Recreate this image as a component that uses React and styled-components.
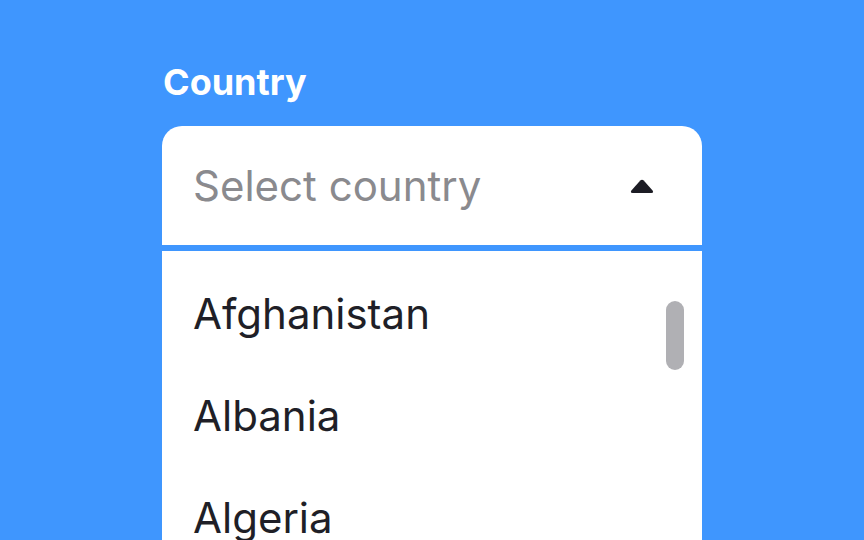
import styled, { createGlobalStyle } from "styled-components";

const COUNTRIES = ["Afghanistan", "Albania", "Algeria", "Andorra", "Angola"];

const GlobalStyle = createGlobalStyle`
  html, body {
    margin: 0;
    padding: 0;
    background: #3f96fe;
    overflow: hidden;
  }
  body {
    font-family: Inter, "Noto Sans", sans-serif;
  }
`;

const App = () => {
  return (
    <>
      <GlobalStyle />
      <Page>
        <Field>
          <Label>Country</Label>
          <SelectBox>
            <Placeholder>Select country</Placeholder>
            <Caret viewBox="0 0 24 16">
              <path
                d="M10.3 1.6 Q12 -0.2 13.7 1.6 L22.6 11.6 Q24 14 21.4 14 H2.6 Q0 14 1.4 11.6 Z"
                fill="#1c1c24"
              />
            </Caret>
          </SelectBox>
          <Menu>
            <Options>
              {COUNTRIES.map((name) => (
                <Option key={name}>{name}</Option>
              ))}
            </Options>
            <ScrollThumb />
          </Menu>
        </Field>
      </Page>
    </>
  );
};

export default App;

const Page = styled.div`
  width: 864px;
  height: 540px;
  padding-top: 58px;
  padding-left: 162px;
  box-sizing: border-box;
  overflow: hidden;
`;

const Field = styled.div`
  width: 540px;
  display: flex;
  flex-direction: column;
`;

const Label = styled.div`
  color: #ffffff;
  font-size: 36px;
  font-weight: 700;
  line-height: 48px;
  padding-left: 1px;
  margin-bottom: 20px;
`;

const SelectBox = styled.div`
  height: 119px;
  background: #ffffff;
  border-radius: 20px 20px 0 0;
  display: flex;
  align-items: center;
  justify-content: space-between;
  padding: 0 48px 0 31px;
  box-sizing: border-box;
`;

const Placeholder = styled.span`
  color: #8a8a8e;
  font-size: 42px;
  font-weight: 400;
`;

const Caret = styled.svg`
  width: 24px;
  height: 16px;
  margin-top: 2px;
`;

const Menu = styled.div`
  position: relative;
  margin-top: 6px;
  background: #ffffff;
  height: 400px;
`;

const Options = styled.ul`
  list-style: none;
  margin: 0;
  padding: 11px 0 0 31px;
`;

const Option = styled.li`
  height: 102px;
  display: flex;
  align-items: center;
  color: #1f1f27;
  font-size: 42px;
  font-weight: 400;
`;

const ScrollThumb = styled.div`
  position: absolute;
  top: 50px;
  right: 18px;
  width: 18px;
  height: 69px;
  border-radius: 9px;
  background: #b0b0b4;
`;
